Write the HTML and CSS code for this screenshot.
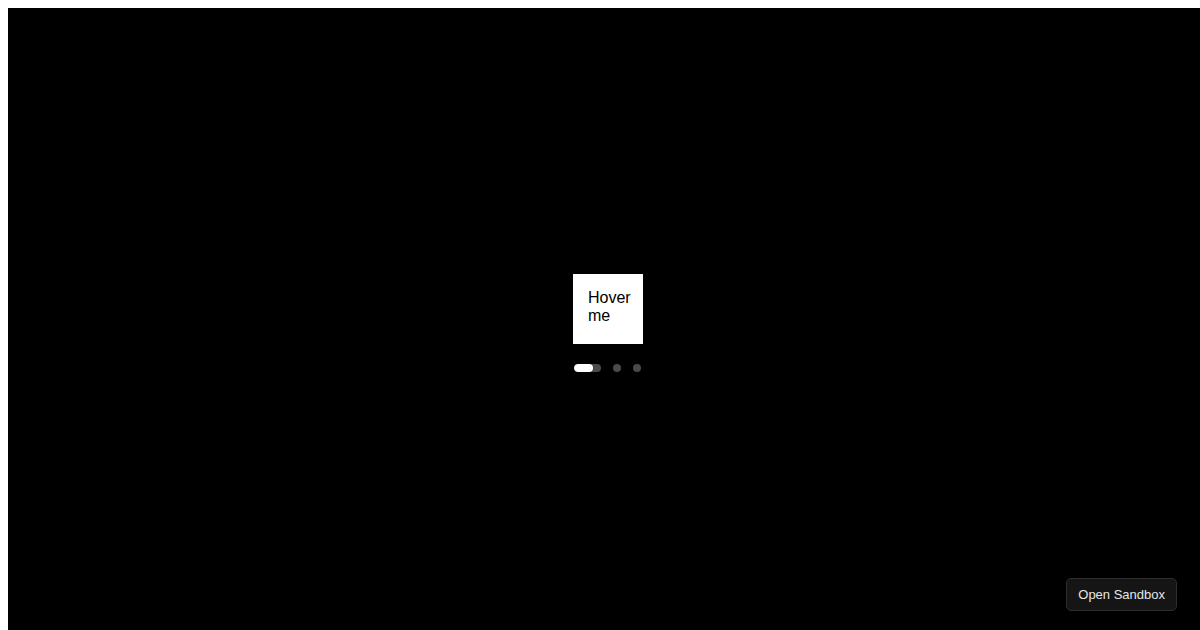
FILE: index.html
```html
<!DOCTYPE html>
<html>
<head>
<meta charset="utf-8">
<link rel="stylesheet" href="styles.css">
</head>
<body>
<main class="stage">
  <div class="card">Hover me</div>
  <div class="dots">
    <span class="dot dot-active"><span class="dot-fill"></span></span>
    <span class="dot"></span>
    <span class="dot"></span>
  </div>
</main>
<a class="sandbox-btn">Open Sandbox</a>
</body>
</html>
```
FILE: styles.css
```css
html {
  overflow: hidden;
  background: #fff;
}
body {
  margin: 8px 0 0 8px;
  background: #fff;
}
.stage {
  box-sizing: border-box;
  width: calc(100vw - 8px);
  height: calc(100vh - 8px);
  padding: 8px 0 0 8px;
  background: #000;
  display: flex;
  flex-direction: column;
  align-items: center;
  justify-content: center;
  gap: 20px;
}
.card {
  width: 70px;
  height: 70px;
  box-sizing: border-box;
  padding: 15px;
  background: #fff;
  color: #000;
  font-family: "Liberation Sans", Arial, sans-serif;
  font-size: 16px;
  line-height: 18.4px;
}
.dots {
  display: flex;
  gap: 12px;
  margin-left: -1px;
}
.dot {
  display: block;
  width: 8px;
  height: 8px;
  border-radius: 4px;
  background: #4a4a4a;
  overflow: hidden;
}
.dot-active {
  width: 27px;
}
.dot-fill {
  display: block;
  width: 19px;
  height: 8px;
  border-radius: 4px;
  background: #fff;
}
.sandbox-btn {
  position: fixed;
  right: 23px;
  bottom: 19px;
  box-sizing: border-box;
  height: 33px;
  padding: 0 11px;
  display: flex;
  align-items: center;
  background: #151515;
  border: 1px solid #2e2e2e;
  border-radius: 5px;
  color: #e6e6e6;
  font-family: "Liberation Sans", Arial, sans-serif;
  font-size: 13px;
}
```
